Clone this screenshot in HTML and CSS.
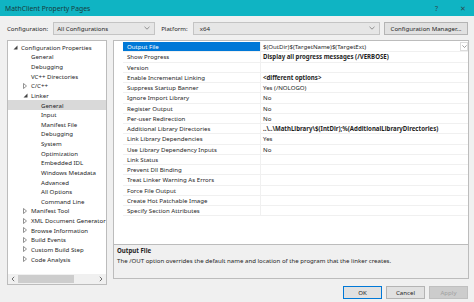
FILE: index.html
```html
<!DOCTYPE html>
<html lang="en">
<head>
    <meta charset="UTF-8">
    <title>MathClient Property Pages</title>
    <link rel="stylesheet" href="styles.css">
</head>
<body>
<div class="window">

    <!-- Title bar -->
    <div class="titlebar">
        <span class="title">MathClient Property Pages</span>
        <span class="title-btn help">?</span>
        <span class="title-btn close">&#x2715;</span>
    </div>

    <!-- Configuration / Platform row -->
    <div class="toolbar">
        <label class="tb-label">Configuration:</label>
        <div class="combo combo-config">
            <span>All Configurations</span>
            <svg class="chev" width="6" height="4" viewBox="0 0 6 4"><path d="M0.5 0.8L3 3.2L5.5 0.8" fill="none" stroke="#777" stroke-width="0.8"/></svg>
        </div>
        <label class="tb-label platform-label">Platform:</label>
        <div class="combo combo-platform">
            <span>x64</span>
            <svg class="chev" width="6" height="4" viewBox="0 0 6 4"><path d="M0.5 0.8L3 3.2L5.5 0.8" fill="none" stroke="#777" stroke-width="0.8"/></svg>
        </div>
        <button class="btn btn-manager">Configuration Manager...</button>
    </div>

    <div class="main">
        <!-- Tree of property pages -->
        <div class="tree">
            <div class="tree-list">
                <div class="node l0"><span class="tw"><svg width="5" height="5" viewBox="0 0 5 5"><path d="M4.5 0.5V4.5H0.5Z" fill="#444"/></svg></span>Configuration Properties</div>
                <div class="node l1"><span class="tw"></span>General</div>
                <div class="node l1"><span class="tw"></span>Debugging</div>
                <div class="node l1"><span class="tw"></span>VC++ Directories</div>
                <div class="node l1"><span class="tw"><svg width="4" height="6" viewBox="0 0 4 6"><path d="M0.5 0.5L3.5 3L0.5 5.5Z" fill="none" stroke="#777" stroke-width="0.8"/></svg></span>C/C++</div>
                <div class="node l1"><span class="tw"><svg width="5" height="5" viewBox="0 0 5 5"><path d="M4.5 0.5V4.5H0.5Z" fill="#444"/></svg></span>Linker</div>
                <div class="node l2 selected"><span class="tw"></span>General</div>
                <div class="node l2"><span class="tw"></span>Input</div>
                <div class="node l2"><span class="tw"></span>Manifest File</div>
                <div class="node l2"><span class="tw"></span>Debugging</div>
                <div class="node l2"><span class="tw"></span>System</div>
                <div class="node l2"><span class="tw"></span>Optimization</div>
                <div class="node l2"><span class="tw"></span>Embedded IDL</div>
                <div class="node l2"><span class="tw"></span>Windows Metadata</div>
                <div class="node l2"><span class="tw"></span>Advanced</div>
                <div class="node l2"><span class="tw"></span>All Options</div>
                <div class="node l2"><span class="tw"></span>Command Line</div>
                <div class="node l1"><span class="tw"><svg width="4" height="6" viewBox="0 0 4 6"><path d="M0.5 0.5L3.5 3L0.5 5.5Z" fill="none" stroke="#777" stroke-width="0.8"/></svg></span>Manifest Tool</div>
                <div class="node l1"><span class="tw"><svg width="4" height="6" viewBox="0 0 4 6"><path d="M0.5 0.5L3.5 3L0.5 5.5Z" fill="none" stroke="#777" stroke-width="0.8"/></svg></span>XML Document Generator</div>
                <div class="node l1"><span class="tw"><svg width="4" height="6" viewBox="0 0 4 6"><path d="M0.5 0.5L3.5 3L0.5 5.5Z" fill="none" stroke="#777" stroke-width="0.8"/></svg></span>Browse Information</div>
                <div class="node l1"><span class="tw"><svg width="4" height="6" viewBox="0 0 4 6"><path d="M0.5 0.5L3.5 3L0.5 5.5Z" fill="none" stroke="#777" stroke-width="0.8"/></svg></span>Build Events</div>
                <div class="node l1"><span class="tw"><svg width="4" height="6" viewBox="0 0 4 6"><path d="M0.5 0.5L3.5 3L0.5 5.5Z" fill="none" stroke="#777" stroke-width="0.8"/></svg></span>Custom Build Step</div>
                <div class="node l1"><span class="tw"><svg width="4" height="6" viewBox="0 0 4 6"><path d="M0.5 0.5L3.5 3L0.5 5.5Z" fill="none" stroke="#777" stroke-width="0.8"/></svg></span>Code Analysis</div>
            </div>
            <div class="hscroll">
                <svg width="4" height="6" viewBox="0 0 4 6"><path d="M3.2 0.8L1 3L3.2 5.2" fill="none" stroke="#606060" stroke-width="0.9"/></svg>
                <div class="hscroll-track"><div class="hscroll-thumb"></div></div>
                <svg width="4" height="6" viewBox="0 0 4 6"><path d="M0.8 0.8L3 3L0.8 5.2" fill="none" stroke="#606060" stroke-width="0.9"/></svg>
            </div>
        </div>

        <div class="right">
            <!-- Property grid -->
            <div class="grid">
                <div class="row active"><div class="name">Output File</div><div class="value">$(OutDir)$(TargetName)$(TargetExt)<span class="drop"><svg width="5" height="3" viewBox="0 0 5 3"><path d="M0.4 0.4L2.5 2.5L4.6 0.4" fill="none" stroke="#777" stroke-width="0.7"/></svg></span></div></div>
                <div class="row"><div class="name">Show Progress</div><div class="value bold">Display all progress messages (/VERBOSE)</div></div>
                <div class="row"><div class="name">Version</div><div class="value"></div></div>
                <div class="row"><div class="name">Enable Incremental Linking</div><div class="value bold">&lt;different options&gt;</div></div>
                <div class="row"><div class="name">Suppress Startup Banner</div><div class="value">Yes (/NOLOGO)</div></div>
                <div class="row"><div class="name">Ignore Import Library</div><div class="value">No</div></div>
                <div class="row"><div class="name">Register Output</div><div class="value">No</div></div>
                <div class="row"><div class="name">Per-user Redirection</div><div class="value">No</div></div>
                <div class="row"><div class="name">Additional Library Directories</div><div class="value bold">..\..\MathLibrary\$(IntDir);%(AdditionalLibraryDirectories)</div></div>
                <div class="row"><div class="name">Link Library Dependencies</div><div class="value">Yes</div></div>
                <div class="row"><div class="name">Use Library Dependency Inputs</div><div class="value">No</div></div>
                <div class="row"><div class="name">Link Status</div><div class="value"></div></div>
                <div class="row"><div class="name">Prevent Dll Binding</div><div class="value"></div></div>
                <div class="row"><div class="name">Treat Linker Warning As Errors</div><div class="value"></div></div>
                <div class="row"><div class="name">Force File Output</div><div class="value"></div></div>
                <div class="row"><div class="name">Create Hot Patchable Image</div><div class="value"></div></div>
                <div class="row"><div class="name">Specify Section Attributes</div><div class="value"></div></div>
            </div>

            <!-- Description of the selected property -->
            <div class="desc">
                <div class="desc-title">Output File</div>
                <div class="desc-text">The /OUT option overrides the default name and location of the program that the linker creates.</div>
            </div>

            <div class="buttons">
                <button class="btn btn-ok">OK</button>
                <button class="btn">Cancel</button>
                <button class="btn btn-disabled">Apply</button>
            </div>
        </div>
    </div>
</div>
</body>
</html>
```

FILE: styles.css
```css
body {
    margin: 0;
    background-color: #f0f0f0;
    font-family: 'Noto Sans', 'Open Sans', sans-serif;
    font-size: 6.1px;
    color: #1e1e1e;
}

.window {
    width: 474px;
    height: 302px;
    overflow: hidden;
    background-color: #f0f0f0;
}

/* Title bar */
.titlebar {
    height: 16px;
    background-color: #0fb4c3;
    display: flex;
    align-items: center;
    padding: 0 8px 0 5px;
    color: #163c40;
}

.title {
    flex: 1;
    font-size: 6.8px;
}

.title-btn {
    font-size: 7px;
    color: #2a4a50;
}

.help {
    margin-right: 22px;
}

/* Configuration row */
.toolbar {
    height: 24px;
    display: flex;
    align-items: center;
    padding: 0 6px 0 7px;
}

.tb-label {
    margin-right: 5px;
}

.platform-label {
    margin-left: 6px;
}

.combo {
    height: 13px;
    box-sizing: border-box;
    border: 1px solid #c4c4c4;
    background-color: #e6e6e6;
    display: flex;
    align-items: center;
    justify-content: space-between;
    padding: 0 4px 0 3px;
}

.combo-config {
    width: 102px;
}

.combo-platform {
    width: 187px;
    padding-left: 6px;
}

.btn {
    font-family: inherit;
    font-size: 6.1px;
    color: #1e1e1e;
    height: 13px;
    box-sizing: border-box;
    border: 1px solid #b4b4b4;
    background-color: #e1e1e1;
    padding: 0;
    width: 39px;
}

.btn-manager {
    margin-left: auto;
    width: 84px;
}

/* Main area */
.main {
    display: flex;
    gap: 6px;
    padding: 0 5px 0 7px;
}

.tree {
    width: 100px;
    height: 245px;
    box-sizing: border-box;
    border: 1px solid #bcbcbc;
    background-color: #fff;
    display: flex;
    flex-direction: column;
}

.tree-list {
    flex: 1;
    padding-top: 1.5px;
    overflow: hidden;
}

.node {
    height: 9.64px;
    display: flex;
    align-items: center;
    white-space: nowrap;
}

.node.l0 { padding-left: 5px; }
.node.l1 { padding-left: 15px; }
.node.l2 { padding-left: 25px; }

.node.selected {
    background-color: #d9d9d9;
}

.tw {
    width: 8px;
    flex-shrink: 0;
    display: flex;
    align-items: center;
}

.hscroll {
    height: 10px;
    display: flex;
    align-items: center;
    gap: 3px;
    padding: 0 3px;
    background-color: #f0f0f0;
}

.hscroll-track {
    flex: 1;
    height: 8px;
}

.hscroll-thumb {
    width: 56px;
    height: 100%;
    background-color: #cdcdcd;
}

.right {
    width: 356px;
    display: flex;
    flex-direction: column;
}

/* Property grid */
.grid {
    height: 205px;
    box-sizing: border-box;
    border: 1px solid #bcbcbc;
    background-color: #fff;
    padding-top: 1px;
    padding-left: 9px;
}

.row {
    height: 10.25px;
    display: flex;
    box-sizing: border-box;
    border-bottom: 1px solid #f0f0f0;
}

.name {
    width: 138px;
    flex-shrink: 0;
    padding-left: 4px;
    box-sizing: border-box;
    border-right: 1px solid #f0f0f0;
    display: flex;
    align-items: center;
    white-space: nowrap;
}

.value {
    flex: 1;
    padding-left: 2px;
    display: flex;
    align-items: center;
    white-space: nowrap;
    overflow: hidden;
}

.value.bold {
    font-weight: bold;
}

.row.active .name {
    background-color: #0078d7;
    color: #fff;
}

.drop {
    margin-left: auto;
    width: 8px;
    height: 9px;
    box-sizing: border-box;
    border: 1px solid #dcdcdc;
    display: flex;
    align-items: center;
    justify-content: center;
}

/* Description */
.desc {
    height: 34px;
    box-sizing: border-box;
    border: 1px solid #bcbcbc;
    border-top: none;
    padding: 1px 3px;
}

.desc-title {
    font-weight: bold;
    line-height: 10px;
}

.desc-text {
    line-height: 10px;
}

.buttons {
    margin-top: 7px;
    display: flex;
    justify-content: flex-end;
    gap: 4px;
    padding-right: 1px;
}

.btn-ok {
    border-color: #0078d7;
}

.btn-disabled {
    color: #a0a0a0;
    background-color: #cccccc;
    border-color: #bfbfbf;
}
```
